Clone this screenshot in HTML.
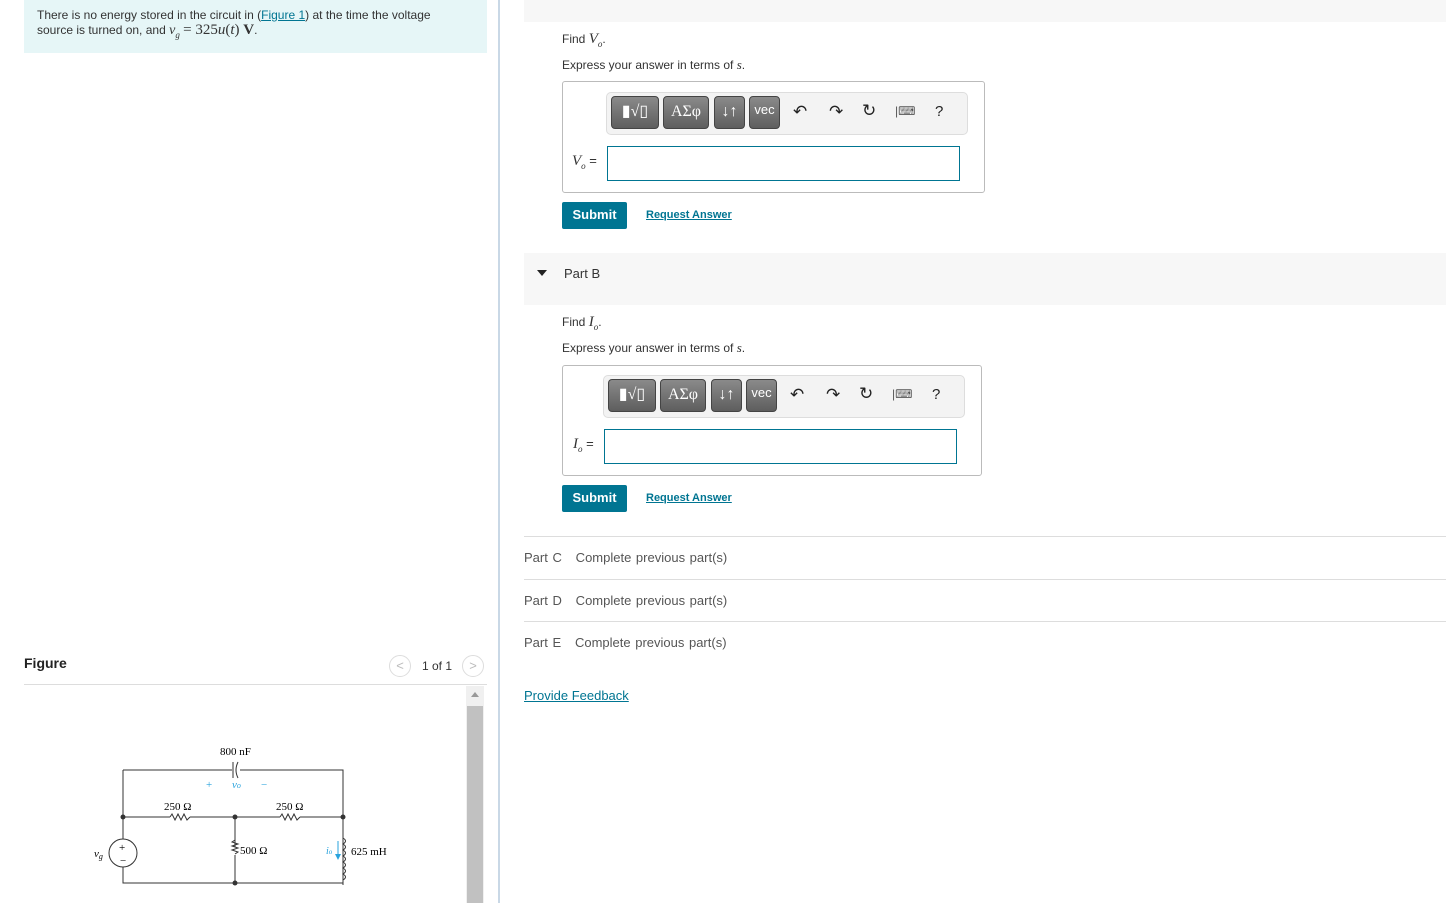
<!DOCTYPE html>
<html><head><meta charset="utf-8"><style>
*{box-sizing:border-box;margin:0;padding:0}
body{width:1446px;height:903px;overflow:hidden;background:#fff;font-family:"Liberation Sans",sans-serif;color:#333;position:relative}
.a{position:absolute}
.m{font-family:"Liberation Serif",serif;font-style:italic}
.btn{position:absolute;height:33px;border-radius:4px;background:linear-gradient(#8a8a8a,#5e5e5e);border:1px solid #444;color:#fff;font-size:16px;text-align:center;line-height:30px}
.tb{position:absolute;width:362px;height:43px;background:#f3f3f3;border:1px solid #ddd;border-radius:5px}
.ic{position:absolute;font-size:17px;color:#222}
.sub{position:absolute;width:65px;height:27px;background:#007592;color:#fff;font-weight:bold;font-size:13px;line-height:26px;text-align:center;border-radius:2px}
.ra{position:absolute;color:#007592;font-size:11px;font-weight:bold;text-decoration:underline}
.pl{position:absolute;left:524px;font-size:13px;color:#555;word-spacing:1px}
.hr{position:absolute;left:524px;width:922px;height:1px;background:#ddd}
</style></head><body>
<div class="a" style="left:24px;top:0;width:463px;height:53px;background:#e6f6f7"></div>
<div class="a" style="left:37px;top:8px;font-size:12px;line-height:15px;color:#333;width:405px">There is no energy stored in the circuit in (<span style="color:#007592;text-decoration:underline">Figure 1</span>) at the time the voltage source is turned on, and <span class="m" style="font-size:14px">v<sub style="font-size:9px">g</sub></span> <span style="font-family:'Liberation Serif';font-size:15px">= 325<i>u</i>(<i>t</i>) <b>V</b></span>.</div>
<div class="a" style="left:498px;top:0;width:2px;height:903px;background:#c9d8e6"></div>

<div class="a" style="left:24px;top:655px;font-size:14px;font-weight:bold;color:#222">Figure</div>
<div class="a" style="left:389px;top:655px;width:22px;height:22px;border:1px solid #ddd;border-radius:50%;color:#bbb;font-size:13px;text-align:center;line-height:20px">&lt;</div>
<div class="a" style="left:422px;top:659px;font-size:12px;color:#333">1 of 1</div>
<div class="a" style="left:462px;top:655px;width:22px;height:22px;border:1px solid #ddd;border-radius:50%;color:#bbb;font-size:13px;text-align:center;line-height:20px">&gt;</div>
<div class="a" style="left:24px;top:684px;width:463px;height:1px;background:#ddd"></div>
<div class="a" style="left:466px;top:686px;width:18px;height:217px;background:#f0f0f0"></div>
<div class="a" style="left:467px;top:706px;width:16px;height:197px;background:#c1c1c1"></div>
<div class="a" style="left:471px;top:692px;width:0;height:0;border-left:4px solid transparent;border-right:4px solid transparent;border-bottom:5px solid #999"></div>

<svg class="a" style="left:80px;top:730px" width="340" height="173" font-family="Liberation Serif" font-size="11">
<g stroke="#333" fill="none" stroke-width="1">
<path d="M43 40H152M160 40H263V153H43V40M43 87H90M110 87H200M220 87H263M155 87v30M155 125v28M263 110v45"/>
<path d="M153 32v16M158 32q-4 8 0 16"/>
<path d="M90 87l2-3 3 6 3-6 3 6 3-6 3 6 3-3M200 87l2-3 3 6 3-6 3 6 3-6 3 6 3-3" />
<path d="M155 110l-3 2 6 2-6 2 6 2-6 2 6 2-3 2"/>
<path d="M263 108q5 3 0 6q5 3 0 6q5 3 0 6q5 3 0 6q5 3 0 6q5 3 0 6q5 3 0 6"/>
<circle cx="43" cy="123" r="14" fill="#fff"/>
</g>
<g fill="#333"><circle cx="43" cy="87" r="2.5"/><circle cx="155" cy="87" r="2.5"/><circle cx="263" cy="87" r="2.5"/><circle cx="155" cy="153" r="2.5"/></g>
<text x="140" y="25">800 nF</text><text x="84" y="80">250 Ω</text><text x="196" y="80">250 Ω</text>
<text x="160" y="124">500 Ω</text><text x="271" y="125">625 mH</text>
<text x="14" y="127" font-style="italic">v<tspan font-size="8" dy="2">g</tspan></text>
<text x="39" y="121" font-size="11">+</text><text x="40" y="134" font-size="11">−</text>
<g fill="#29a3dd"><text x="126" y="58">+</text><text x="152" y="58" font-style="italic">v<tspan font-size="8">o</tspan></text><text x="181" y="58">−</text>
<text x="246" y="124" font-style="italic" font-size="10">i<tspan font-size="7">o</tspan></text>
<path d="M258 111v14" stroke="#29a3dd"/><path d="M255 124l3 6 3-6z"/></g>
</svg>

<div class="a" style="left:524px;top:0;width:922px;height:22px;background:#f7f7f7"></div>
<div class="a" style="left:562px;top:31px;font-size:12px">Find <span class="m" style="font-size:15px">V<sub style="font-size:9px">o</sub></span>.</div>
<div class="a" style="left:562px;top:57px;font-size:12px">Express your answer in terms of <span class="m" style="font-size:13px">s</span>.</div>
<div class="a" style="left:562px;top:81px;width:423px;height:112px;border:1px solid #bbb;border-radius:3px"></div>
<div class="tb" style="left:606px;top:92px"></div>
<div class="btn" style="left:611px;top:96px;width:48px;font-family:'Liberation Serif'">▮√▯</div>
<div class="btn" style="left:663px;top:96px;width:46px;font-family:'Liberation Serif'">ΑΣφ</div>
<div class="btn" style="left:714px;top:96px;width:31px">↓↑</div>
<div class="btn" style="left:749px;top:96px;width:31px;font-size:13px;line-height:26px">vec</div>
<div class="ic" style="left:793px;top:102px">↶</div><div class="ic" style="left:829px;top:102px">↷</div><div class="ic" style="left:862px;top:101px">↻</div>
<div class="ic" style="left:895px;top:104px;font-size:12px;color:#555">|⌨</div><div class="ic" style="left:935px;top:103px;font-size:15px">?</div>
<div class="a" style="left:572px;top:153px;font-size:13px"><span class="m" style="font-size:15px">V<sub style="font-size:9px">o</sub></span> =</div>
<div class="a" style="left:607px;top:146px;width:353px;height:35px;border:1px solid #007592"></div>
<div class="sub" style="left:562px;top:202px">Submit</div>
<div class="ra" style="left:646px;top:209px">Request Answer</div>

<div class="a" style="left:524px;top:253px;width:922px;height:52px;background:#f7f7f7"></div>
<div class="a" style="left:537px;top:270px;width:0;height:0;border-left:5px solid transparent;border-right:5px solid transparent;border-top:6px solid #222"></div>
<div class="a" style="left:564px;top:266px;font-size:13px;color:#333">Part B</div>
<div class="a" style="left:562px;top:314px;font-size:12px">Find <span class="m" style="font-size:15px">I<sub style="font-size:9px">o</sub></span>.</div>
<div class="a" style="left:562px;top:340px;font-size:12px">Express your answer in terms of <span class="m" style="font-size:13px">s</span>.</div>
<div class="a" style="left:562px;top:365px;width:420px;height:111px;border:1px solid #bbb;border-radius:3px"></div>
<div class="tb" style="left:603px;top:375px"></div>
<div class="btn" style="left:608px;top:379px;width:48px;font-family:'Liberation Serif'">▮√▯</div>
<div class="btn" style="left:660px;top:379px;width:46px;font-family:'Liberation Serif'">ΑΣφ</div>
<div class="btn" style="left:711px;top:379px;width:31px">↓↑</div>
<div class="btn" style="left:746px;top:379px;width:31px;font-size:13px;line-height:26px">vec</div>
<div class="ic" style="left:790px;top:385px">↶</div><div class="ic" style="left:826px;top:385px">↷</div><div class="ic" style="left:859px;top:384px">↻</div>
<div class="ic" style="left:892px;top:387px;font-size:12px;color:#555">|⌨</div><div class="ic" style="left:932px;top:386px;font-size:15px">?</div>
<div class="a" style="left:573px;top:436px;font-size:13px"><span class="m" style="font-size:15px">I<sub style="font-size:9px">o</sub></span> =</div>
<div class="a" style="left:604px;top:429px;width:353px;height:35px;border:1px solid #007592"></div>
<div class="sub" style="left:562px;top:485px">Submit</div>
<div class="ra" style="left:646px;top:492px">Request Answer</div>

<div class="hr" style="top:536px"></div>
<div class="pl" style="top:550px">Part C &nbsp; Complete previous part(s)</div>
<div class="hr" style="top:579px"></div>
<div class="pl" style="top:593px">Part D &nbsp; Complete previous part(s)</div>
<div class="hr" style="top:621px"></div>
<div class="pl" style="top:635px">Part E &nbsp; Complete previous part(s)</div>
<div class="a" style="left:524px;top:688px;font-size:13px;color:#007592;text-decoration:underline">Provide Feedback</div>
</body></html>
